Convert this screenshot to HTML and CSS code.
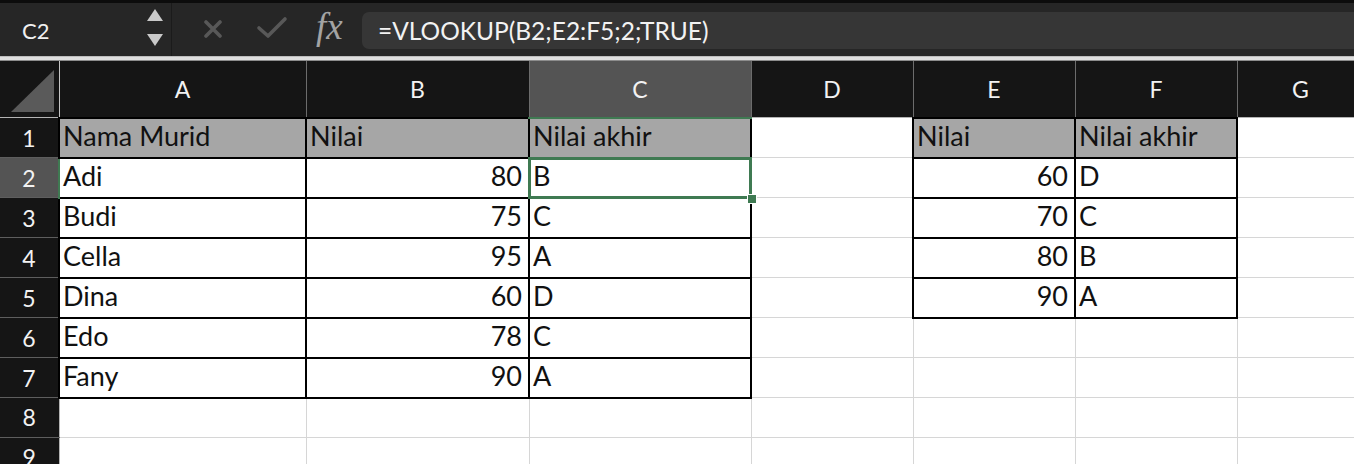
FILE: index.html
```html
<!DOCTYPE html>
<html lang="id">
<head>
    <meta charset="UTF-8">
    <meta name="viewport" content="width=device-width, initial-scale=1.0">
    <title>Nilai Murid - VLOOKUP</title>
    <link rel="stylesheet" href="styles.css">
</head>
<body>
    <div class="toolbar">
        <div class="namebox">
            <span class="cell-ref">C2</span>
            <svg class="stepper" width="16" height="38" viewBox="0 0 16 38">
                <path d="M8 0 L16 12 L0 12 Z" fill="#c9c9c9"/>
                <path d="M0 25 L16 25 L8 37 Z" fill="#c9c9c9"/>
            </svg>
        </div>
        <div class="actions">
            <svg class="icon-cancel" width="20" height="18" viewBox="0 0 20 18">
                <path d="M3 2 L17 16 M17 2 L3 16" stroke="#585858" stroke-width="3.6" stroke-linecap="round"/>
            </svg>
            <svg class="icon-enter" width="32" height="24" viewBox="0 0 32 24">
                <path d="M3 12 L12 20 L29 3" stroke="#585858" stroke-width="3.6" fill="none" stroke-linecap="round" stroke-linejoin="round"/>
            </svg>
            <span class="fx">fx</span>
        </div>
        <div class="formula">=VLOOKUP(B2;E2:F5;2;TRUE)</div>
    </div>
    <div class="divider"></div>

    <table class="sheet">
        <colgroup>
            <col class="c-row">
            <col class="c-a">
            <col class="c-b">
            <col class="c-c">
            <col class="c-d">
            <col class="c-e">
            <col class="c-f">
            <col class="c-g">
        </colgroup>
        <thead>
            <tr>
                <th class="corner">
                    <svg width="58" height="56" viewBox="0 0 58 56">
                        <path d="M11 51 L54 9 L54 51 Z" fill="#5a5a5a"/>
                    </svg>
                </th>
                <th>A</th>
                <th>B</th>
                <th class="active">C</th>
                <th>D</th>
                <th>E</th>
                <th>F</th>
                <th>G</th>
            </tr>
        </thead>
        <tbody>
            <tr>
                <th class="rownum">1</th>
                <td class="b head">Nama Murid</td>
                <td class="b head">Nilai</td>
                <td class="b head">Nilai akhir</td>
                <td></td>
                <td class="b head">Nilai</td>
                <td class="b head">Nilai akhir</td>
                <td></td>
            </tr>
            <tr>
                <th class="rownum active">2</th>
                <td class="b">Adi</td>
                <td class="b num">80</td>
                <td class="b selected">B</td>
                <td></td>
                <td class="b num">60</td>
                <td class="b">D</td>
                <td></td>
            </tr>
            <tr>
                <th class="rownum">3</th>
                <td class="b">Budi</td>
                <td class="b num">75</td>
                <td class="b">C</td>
                <td></td>
                <td class="b num">70</td>
                <td class="b">C</td>
                <td></td>
            </tr>
            <tr>
                <th class="rownum">4</th>
                <td class="b">Cella</td>
                <td class="b num">95</td>
                <td class="b">A</td>
                <td></td>
                <td class="b num">80</td>
                <td class="b">B</td>
                <td></td>
            </tr>
            <tr>
                <th class="rownum">5</th>
                <td class="b">Dina</td>
                <td class="b num">60</td>
                <td class="b">D</td>
                <td></td>
                <td class="b num">90</td>
                <td class="b">A</td>
                <td></td>
            </tr>
            <tr>
                <th class="rownum">6</th>
                <td class="b">Edo</td>
                <td class="b num">78</td>
                <td class="b">C</td>
                <td></td>
                <td></td>
                <td></td>
                <td></td>
            </tr>
            <tr>
                <th class="rownum">7</th>
                <td class="b">Fany</td>
                <td class="b num">90</td>
                <td class="b">A</td>
                <td></td>
                <td></td>
                <td></td>
                <td></td>
            </tr>
            <tr>
                <th class="rownum">8</th>
                <td></td>
                <td></td>
                <td></td>
                <td></td>
                <td></td>
                <td></td>
                <td></td>
            </tr>
            <tr>
                <th class="rownum">9</th>
                <td></td>
                <td></td>
                <td></td>
                <td></td>
                <td></td>
                <td></td>
                <td></td>
            </tr>
        </tbody>
    </table>
</body>
</html>
```

FILE: styles.css
```css
body {
    margin: 0;
    padding: 0;
    background: #ffffff;
    font-family: 'Lato', 'Liberation Sans', sans-serif;
    overflow: hidden;
    width: 1354px;
    height: 464px;
}
.toolbar {
    display: flex;
    height: 53px;
    background: #262626;
    border-top: 3px solid #0c0c0c;
}
.namebox {
    width: 141px;
    padding: 0 8px 0 22px;
    display: flex;
    align-items: center;
    justify-content: space-between;
    border-right: 1px solid #1b1b1b;
}
.cell-ref {
    color: #f0f0f0;
    font-size: 22px;
    margin-top: 1px;
}
.stepper {
    margin-top: -4px;
}
.actions {
    width: 190px;
    display: flex;
    align-items: center;
}
.icon-cancel {
    margin-left: 31px;
    margin-top: -2px;
}
.icon-enter {
    margin-left: 33px;
    margin-top: -4px;
}
.fx {
    margin-left: 28px;
    font-family: 'Liberation Serif', serif;
    font-style: italic;
    font-size: 37px;
    color: #a3a3a3;
    margin-top: -6px;
}
.formula {
    flex: 1;
    margin: 9px 0 7px 0;
    background: #363636;
    border-radius: 7px 0 0 7px;
    color: #f2f2f2;
    font-size: 24.5px;
    padding-left: 16px;
    display: flex;
    align-items: center;
}
.divider {
    height: 3px;
    background: #dedede;
    border-top: 1px solid #bdbdbd;
    border-bottom: 1px solid #8c8c8c;
}
.sheet {
    border-collapse: collapse;
    table-layout: fixed;
    width: 1364px;
}
.c-row { width: 59px; }
.c-a { width: 247px; }
.c-b { width: 223px; }
.c-c { width: 222px; }
.c-d { width: 162px; }
.c-e { width: 162px; }
.c-f { width: 162px; }
.c-g { width: 127px; }
thead th {
    height: 54px;
    padding: 0;
    background: #151515;
    color: #f2f2f2;
    font-size: 23px;
    font-weight: normal;
    border-left: 1px solid #6c6c6c;
    border-right: 1px solid #6c6c6c;
    border-bottom: 1px solid #b4b4b4;
    border-top: 0;
}
thead th.corner {
    border-right: 1px solid #c4c4c4;
    border-left: 0;
    line-height: 0;
}
thead th.active {
    background: #545454;
    border-bottom: 2px solid #3f7a52;
}
.rownum {
    padding: 0;
    background: #151515;
    color: #f2f2f2;
    font-size: 23px;
    font-weight: normal;
    border-bottom: 1px solid #5e5e5e;
    border-right: 1px solid #b4b4b4;
}
.rownum.active {
    background: #545454;
    border-right: 2px solid #3f7a52;
}
td {
    height: 34px;
    padding: 0 6px 4px 3px;
    border: 1px solid #d6d6d6;
    font-size: 27px;
    color: #111111;
    vertical-align: bottom;
    line-height: 1.2;
    white-space: nowrap;
    overflow: visible;
}
td.b {
    border: 2px solid #000000;
}
td.head {
    background: #a6a6a6;
}
td.num {
    text-align: right;
}
td.selected {
    position: relative;
}
td.selected::after {
    content: "";
    position: absolute;
    left: -2px;
    top: -2px;
    right: -2px;
    bottom: -2px;
    border: 3px solid #3f7a52;
}
td.selected::before {
    content: "";
    position: absolute;
    right: -7px;
    bottom: -7px;
    width: 8px;
    height: 8px;
    background: #3f7a52;
    border: 1px solid #ffffff;
    z-index: 1;
}
```
